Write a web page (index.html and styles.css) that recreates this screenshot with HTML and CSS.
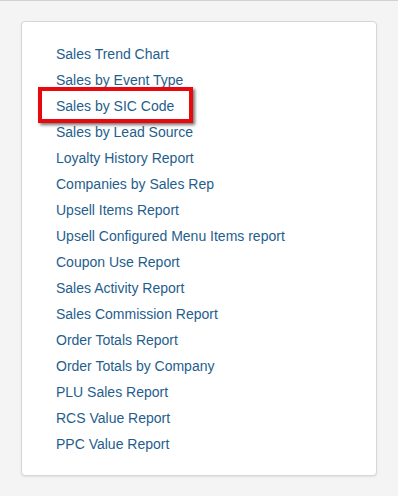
FILE: index.html
```html
<!DOCTYPE html>
<html>
<head>
  <meta charset="UTF-8">
  <title>Reports</title>
  <link rel="stylesheet" href="styles.css">
</head>
<body>
  <div class="page">
    <div class="panel">
      <ul class="reports">
        <li><a href="javascript:;">Sales Trend Chart</a></li>
        <li><a href="javascript:;">Sales by Event Type</a></li>
        <li class="mark"><a href="javascript:;">Sales by SIC Code</a></li>
        <li><a href="javascript:;">Sales by Lead Source</a></li>
        <li><a href="javascript:;">Loyalty History Report</a></li>
        <li><a href="javascript:;">Companies by Sales Rep</a></li>
        <li><a href="javascript:;">Upsell Items Report</a></li>
        <li><a href="javascript:;">Upsell Configured Menu Items report</a></li>
        <li><a href="javascript:;">Coupon Use Report</a></li>
        <li><a href="javascript:;">Sales Activity Report</a></li>
        <li><a href="javascript:;">Sales Commission Report</a></li>
        <li><a href="javascript:;">Order Totals Report</a></li>
        <li><a href="javascript:;">Order Totals by Company</a></li>
        <li><a href="javascript:;">PLU Sales Report</a></li>
        <li><a href="javascript:;">RCS Value Report</a></li>
        <li><a href="javascript:;">PPC Value Report</a></li>
      </ul>
    </div>
  </div>
</body>
</html>
```

FILE: styles.css
```css
* {
  margin: 0;
  padding: 0;
}
a {
  text-decoration: none;
}
body {
  background-color: #f4f4f4;
  font-family: "Liberation Sans", Arial, sans-serif;
  font-size: 14px;
}
.page {
  border-top: 1px solid #d0d0d0;
  padding: 20px 21px 19px 21px;
}
.panel {
  width: 320px;
  background-color: #fff;
  border: 1px solid #d6d6d6;
  border-radius: 4px;
  box-shadow: 0 1px 2px rgba(0,0,0,0.08);
  padding: 19px 0 18px 34px;
}
.reports {
  list-style: none;
}
.reports li {
  line-height: 26px;
}
.reports a {
  color: #1f5e8c;
}
.reports li.mark {
  position: relative;
}
.reports li.mark::after {
  content: "";
  position: absolute;
  left: -18px;
  top: -6px;
  width: 147px;
  height: 28px;
  border: 4px solid #e8090f;
  box-shadow: 2px 2px 3px rgba(0,0,0,0.55);
}
```
